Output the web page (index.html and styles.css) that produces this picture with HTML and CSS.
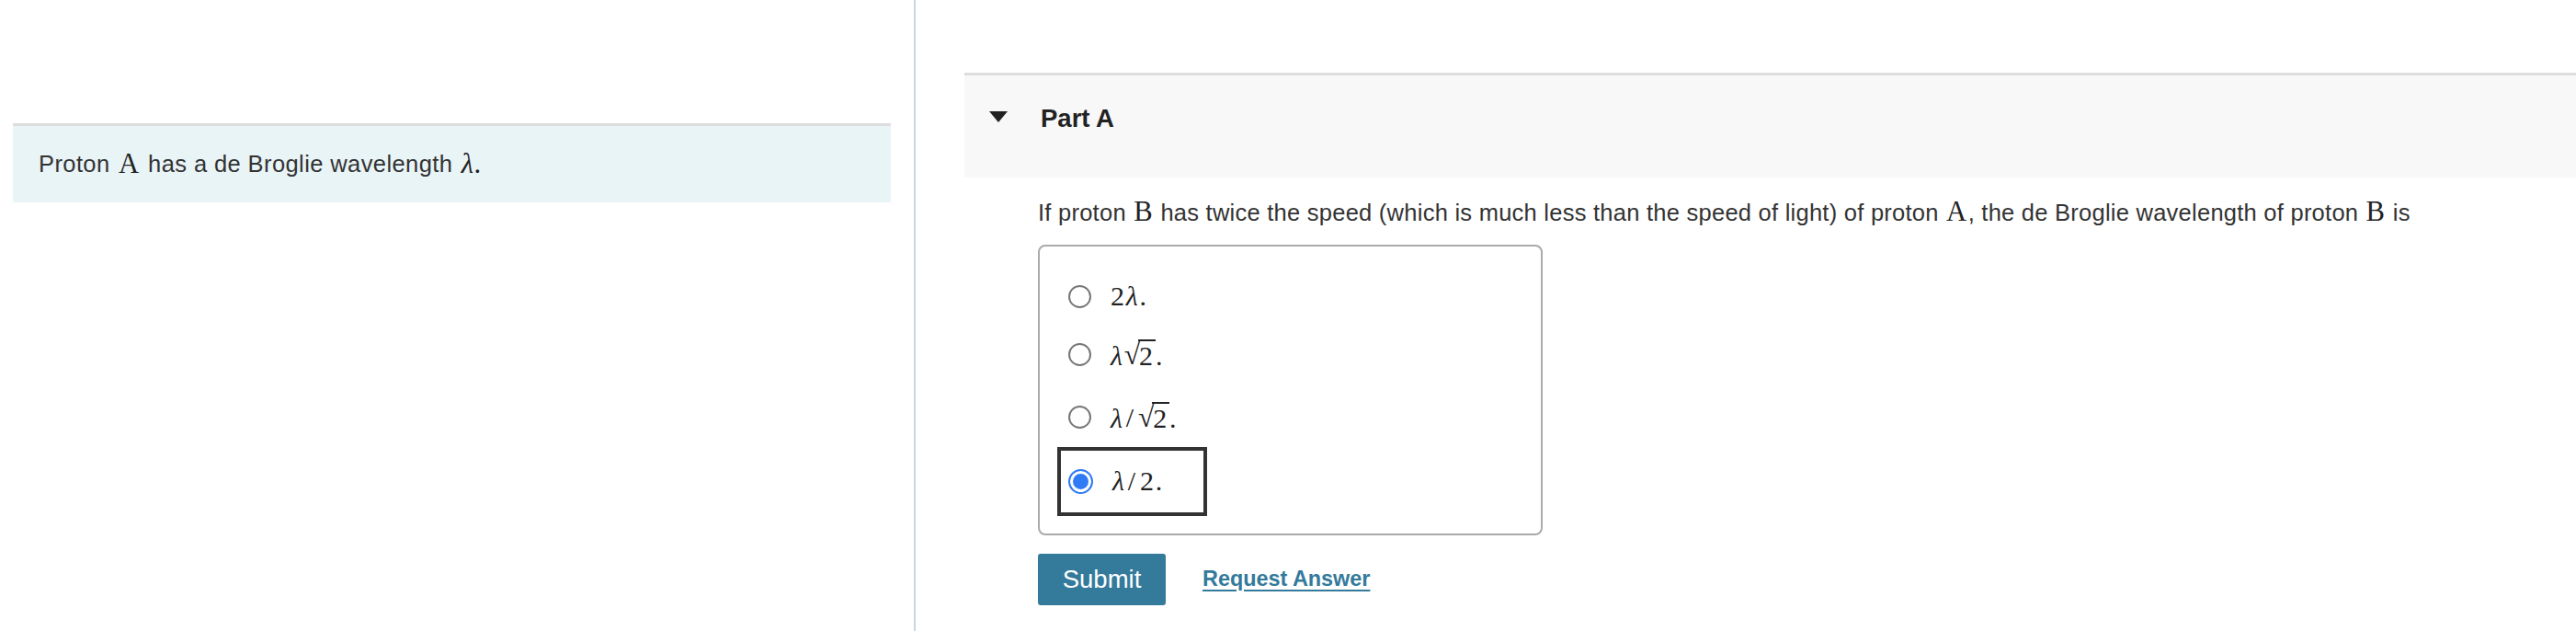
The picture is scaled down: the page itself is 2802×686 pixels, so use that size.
FILE: index.html
```html
<!DOCTYPE html>
<html lang="en">
<head>
<meta charset="utf-8">
<title>Part A</title>
<link rel="stylesheet" href="styles.css">
</head>
<body>
<div class="page">
  <aside class="left">
    <div class="intro">Proton <span class="m">A</span> has a de Broglie wavelength <span class="m"><i>λ</i>.</span></div>
  </aside>
  <div class="divider"></div>
  <main class="right">
    <div class="part-head">
      <span class="caret"></span>
      <h2 class="part-title">Part A</h2>
    </div>
    <div class="part-body">
      <p class="question">If proton <span class="m">B</span> has twice the speed (which is much less than the speed of light) of proton <span class="m">A</span>, the de Broglie wavelength of proton <span class="m">B</span> is</p>
      <div class="choices">
        <label class="choice c1"><span class="radio"></span><span class="m opt">2<i>λ</i>.</span></label>
        <label class="choice c2"><span class="radio"></span><span class="m opt"><i>λ</i><span class="sqrt"><span class="rad">√</span><span class="rc">2</span></span>.</span></label>
        <label class="choice c3"><span class="radio"></span><span class="m opt"><i>λ</i><span class="sl">/</span><span class="sqrt"><span class="rad">√</span><span class="rc">2</span></span>.</span></label>
        <label class="choice c4 selected"><span class="radio on"></span><span class="m opt"><i>λ</i><span class="sl">/</span>2.</span></label>
      </div>
      <div class="actions">
        <button class="submit">Submit</button>
        <a class="request" href="#">Request Answer</a>
      </div>
    </div>
  </main>
</div>
</body>
</html>
```
FILE: styles.css
```css
html, body {
  margin: 0;
  padding: 0;
  background: #fff;
}
body {
  font-family: "Liberation Sans", Arial, Helvetica, sans-serif;
  color: #333;
  font-size: 25px;
}
.page {
  display: flex;
  min-height: 686px;
}
.left {
  width: 994px;
  box-sizing: border-box;
  padding: 134px 25px 0 14px;
  flex: none;
}
.intro {
  border-top: 3px solid #dddddd;
  background: #e9f4f7;
  height: 83px;
  box-sizing: content-box;
  padding: 0 0 0 28px;
  display: flex;
  align-items: center;
  white-space: pre;
  line-height: 1;
  font-size: 25.5px;
  letter-spacing: 0.4px;
}
.m {
  font-family: "Liberation Serif", "Times New Roman", serif;
  font-size: 1.2em;
  color: #222;
  line-height: 1;
  letter-spacing: 0.5px;
}
.m i {
  font-style: italic;
}
.intro .m { margin: 0 2px; }
.divider {
  width: 2px;
  background: #c9d5e2;
  flex: none;
}
.right {
  flex: 1;
  padding: 79px 0 0 53px;
}
.part-head {
  border-top: 3px solid #dddddd;
  background: #f8f8f8;
  height: 78px;
  padding: 33px 0 0 27px;
  display: flex;
  align-items: flex-start;
}
.caret {
  width: 0;
  height: 0;
  border-left: 10.5px solid transparent;
  border-right: 10.5px solid transparent;
  border-top: 12px solid #222;
  margin: 6px 36px 0 0;
}
.part-title {
  margin: 0;
  font-size: 27.5px;
  font-weight: bold;
  line-height: 1;
  color: #222;
}
.part-body {
  padding-left: 80px;
}
.question {
  margin: 22px 0 0;
  line-height: 1;
  font-size: 25.5px;
  letter-spacing: 0.25px;
}
.question .m { margin: 0 1px; }
.choices {
  margin-top: 20px;
  width: 549px;
  box-sizing: border-box;
  border: 2px solid #aaaaaa;
  border-radius: 8px;
  padding: 23px 0 23px 23px;
  display: flex;
  flex-direction: column;
  align-items: flex-start;
}
.choice {
  display: flex;
  align-items: center;
  padding: 0 43px 0 8px;
  height: 63px;
  gap: 21px;
}
.choice.c3 { height: 73px; }
.choice.c4 { height: 67px; }
.choice.selected {
  outline: 4px solid #333;
}
.radio {
  width: 25px;
  height: 25px;
  box-sizing: border-box;
  border: 2px solid #777;
  border-radius: 50%;
  flex: none;
  background: #fff;
}
.radio.on {
  border-color: #2f7bf5;
  box-shadow: inset 0 0 0 3px #fff;
  background: #2f7bf5;
  width: 27px;
  height: 27px;
}
.opt {
  font-size: 30px;
  letter-spacing: 1.8px;
  font-weight: 500;
}
.sl {
  margin: 0 3px 0 2px;
}
.sqrt {
  display: inline-flex;
  align-items: flex-end;
}
.rad {
  font-size: 1.05em;
  line-height: 1;
  letter-spacing: 0;
}
.rc {
  border-top: 2px solid #222;
  line-height: 1;
  padding: 1px 1px 0 1px;
  margin-left: -2px;
}
.actions {
  display: flex;
  align-items: center;
  margin-top: 20px;
  gap: 40px;
}
.submit {
  width: 139px;
  height: 56px;
  background: #347a9b;
  color: #fff;
  border: none;
  border-radius: 3px;
  font-family: "Liberation Sans", Arial, sans-serif;
  font-size: 27.5px;
  padding: 0;
}
.request {
  color: #337a9b;
  font-weight: bold;
  font-size: 23.4px;
  text-decoration: underline;
  text-underline-offset: 4px;
}
```
